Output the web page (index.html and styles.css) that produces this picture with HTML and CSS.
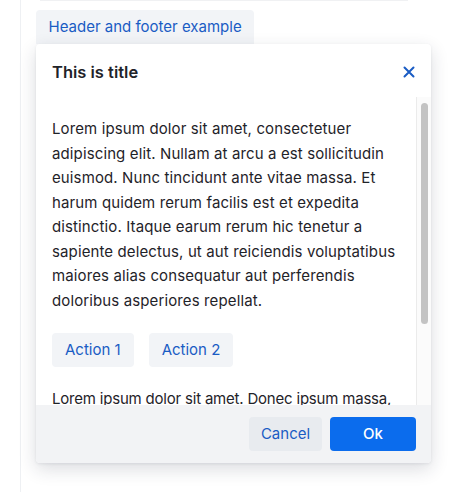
FILE: index.html
```html
<!DOCTYPE html>
<html>
<head>
<meta charset="utf-8">
<link rel="stylesheet" href="styles.css">
</head>
<body>
<div class="page">
  <div class="topline"></div>
  <button class="btn btn-light trigger">Header and footer example</button>
  <div class="modal">
    <div class="modal-header">
      <h2 class="modal-title">This is title</h2>
      <button class="close" aria-label="Close">
        <svg width="12" height="12" viewBox="0 0 12 12"><path d="M1.5 1.5 L10.5 10.5 M10.5 1.5 L1.5 10.5" stroke="#1a5cc4" stroke-width="2" stroke-linecap="round" fill="none"/></svg>
      </button>
    </div>
    <div class="modal-main">
      <div class="modal-body">
        <p>Lorem ipsum dolor sit amet, consectetuer adipiscing elit. Nullam at arcu a est sollicitudin euismod. Nunc tincidunt ante vitae massa. Et harum quidem rerum facilis est et expedita distinctio. Itaque earum rerum hic tenetur a sapiente delectus, ut aut reiciendis voluptatibus maiores alias consequatur aut perferendis doloribus asperiores repellat.</p>
        <div class="actions">
          <button class="btn btn-light">Action 1</button>
          <button class="btn btn-light">Action 2</button>
        </div>
        <p class="clipped">Lorem ipsum dolor sit amet. Donec ipsum massa,</p>
      </div>
      <div class="scrollbar"><div class="thumb"></div></div>
    </div>
    <div class="modal-footer">
      <button class="btn btn-cancel">Cancel</button>
      <button class="btn btn-primary">Ok</button>
    </div>
  </div>
</div>
</body>
</html>
```
FILE: styles.css
```css
html, body {
  margin: 0;
  padding: 0;
  background: #ffffff;
}
body {
  font-family: Inter, "Noto Sans", sans-serif;
  color: #1f2329;
  -webkit-font-smoothing: antialiased;
}
.page {
  margin-left: 20px;
  border-left: 1px solid #eef0f3;
  min-height: 492px;
  padding: 0 0 0 15px;
  box-sizing: border-box;
}
.topline {
  height: 1px;
  width: 368px;
  margin-left: 4px;
  background: #f0f1f3;
}
.btn {
  font-family: inherit;
  font-size: 15px;
  border: none;
  border-radius: 4px;
  cursor: pointer;
  height: 34px;
  padding: 0 13px;
  line-height: 34px;
}
.btn-light {
  background: #f2f4f7;
  color: #1a5cc4;
}
.trigger {
  margin-top: 9px;
  height: 34px;
  padding: 0 12.5px;
  display: block;
  border-radius: 4px 4px 0 0;
}
.modal {
  width: 395px;
  height: 419px;
  background: #ffffff;
  border-radius: 4px;
  box-shadow: 0 6px 18px rgba(30, 40, 60, 0.16), 0 1px 3px rgba(30, 40, 60, 0.08);
  display: flex;
  flex-direction: column;
  overflow: hidden;
}
.modal-header {
  height: 53px;
  box-sizing: border-box;
  flex: none;
  display: flex;
  align-items: center;
  justify-content: space-between;
  padding: 3px 16px 0 16px;
}
.modal-title {
  margin: 0;
  font-size: 16.5px;
  font-weight: 600;
  color: #1f2329;
}
.close {
  background: none;
  border: none;
  padding: 0;
  width: 16px;
  height: 16px;
  display: flex;
  align-items: center;
  justify-content: center;
  margin-right: -2px;
}
.modal-main {
  flex: 1;
  min-height: 0;
  display: flex;
}
.modal-body {
  flex: 1;
  min-width: 0;
  overflow: hidden;
  padding: 20px 12px 0 16px;
}
.scrollbar {
  width: 15px;
  flex: none;
  background: #fbfbfb;
  border-left: 1px solid #ebebeb;
  padding: 6px 0 0 4px;
  box-sizing: border-box;
}
.thumb {
  width: 7px;
  height: 221px;
  border-radius: 4px;
  background: #c3c3c3;
}
.modal-body p {
  margin: 0;
  font-size: 15px;
  line-height: 24.5px;
  letter-spacing: 0.12px;
  color: #1f2329;
}
.modal-body p.clipped {
  letter-spacing: -0.2px;
  white-space: nowrap;
}
.actions {
  display: flex;
  gap: 15px;
  margin: 20px 0 20px;
}
.modal-footer {
  height: 58px;
  flex: none;
  box-sizing: border-box;
  background: #f2f3f5;
  display: flex;
  align-items: center;
  justify-content: flex-end;
  gap: 8px;
  padding: 0 15px;
}
.btn-cancel {
  background: #e8ebef;
  color: #1a5cc4;
  padding: 0 12px;
}
.btn-primary {
  background: #0b6ced;
  color: #ffffff;
  padding: 0 33px;
  font-weight: 500;
}
```
